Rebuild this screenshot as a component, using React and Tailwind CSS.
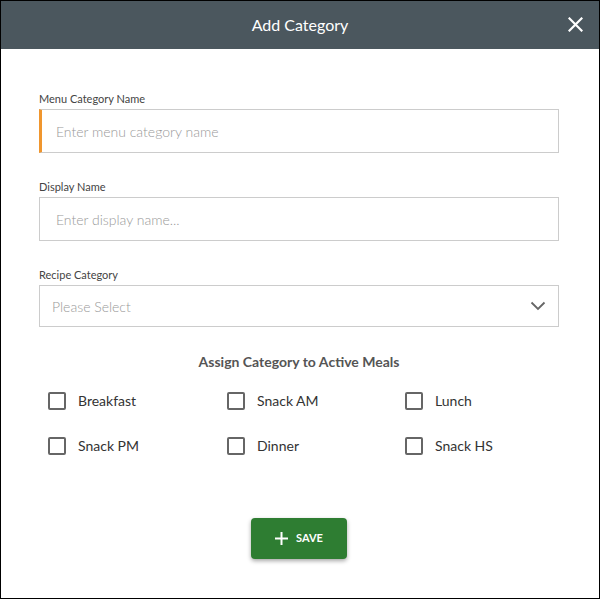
import React from "react";

function Checkbox({ label }) {
  return (
    <label className="flex items-center gap-[12px]">
      <span className="w-[18px] h-[18px] border-2 border-[#666] rounded-[2px] bg-white shrink-0" />
      <span className="text-[14px] text-[#333]">{label}</span>
    </label>
  );
}

export default function App() {
  const font = { fontFamily: "Lato, 'Open Sans', sans-serif" };
  return (
    <div className="w-[600px] h-[599px] bg-white border border-black flex flex-col" style={font}>
      <div className="h-[48px] bg-[#4b575e] flex items-center justify-center relative shrink-0">
        <span className="text-white text-[16px]">Add Category</span>
        <button className="absolute right-[16px] top-[16px] text-white">
          <svg width="15" height="15" viewBox="0 0 15 15" stroke="white" strokeWidth="2.2" strokeLinecap="square">
            <path d="M1.5 1.5L13.5 13.5M13.5 1.5L1.5 13.5" />
          </svg>
        </button>
      </div>
      <div className="flex flex-col pl-[38px] pr-[40px] pt-[43px]">
        <div className="text-[11px] text-[#444] leading-[13px] mb-[4px]">Menu Category Name</div>
        <div className="h-[44px] border border-[#ccc] border-l-[3px] border-l-[#f0962e] flex items-center pl-[14px] text-[14px] font-light text-[#999]">
          Enter menu category name
        </div>
        <div className="text-[11px] text-[#444] leading-[13px] mt-[27px] mb-[4px]">Display Name</div>
        <div className="h-[44px] border border-[#ccc] flex items-center pl-[16px] text-[14px] font-light text-[#999]">
          Enter display name...
        </div>
        <div className="text-[11px] text-[#444] leading-[13px] mt-[27px] mb-[4px]">Recipe Category</div>
        <div className="h-[42px] border border-[#ccc] flex items-center justify-between pl-[12px] pr-[12px] text-[14px] font-light text-[#999]">
          <span>Please Select</span>
          <svg width="16" height="10" viewBox="0 0 16 10" fill="none" stroke="#666" strokeWidth="1.8">
            <path d="M1.5 1.5L8 8L14.5 1.5" />
          </svg>
        </div>
        <div className="text-center text-[14px] font-bold text-[#555] mt-[24px]">Assign Category to Active Meals</div>
        <div className="grid grid-cols-[179px_178px_1fr] gap-y-[24px] pl-[9px] mt-[18px]">
          <Checkbox label="Breakfast" />
          <Checkbox label="Snack AM" />
          <Checkbox label="Lunch" />
          <Checkbox label="Snack PM" />
          <Checkbox label="Dinner" />
          <Checkbox label="Snack HS" />
        </div>
        <div className="flex justify-center mt-[62px]">
          <button className="w-[96px] h-[41px] bg-[#2e7d32] rounded-[4px] shadow-[0_2px_4px_rgba(0,0,0,0.35)] flex items-center justify-center gap-[8px] text-white text-[11px] font-bold">
            <svg width="13" height="13" viewBox="0 0 13 13" stroke="white" strokeWidth="2">
              <path d="M6.5 0V13M0 6.5H13" />
            </svg>
            SAVE
          </button>
        </div>
      </div>
    </div>
  );
}
